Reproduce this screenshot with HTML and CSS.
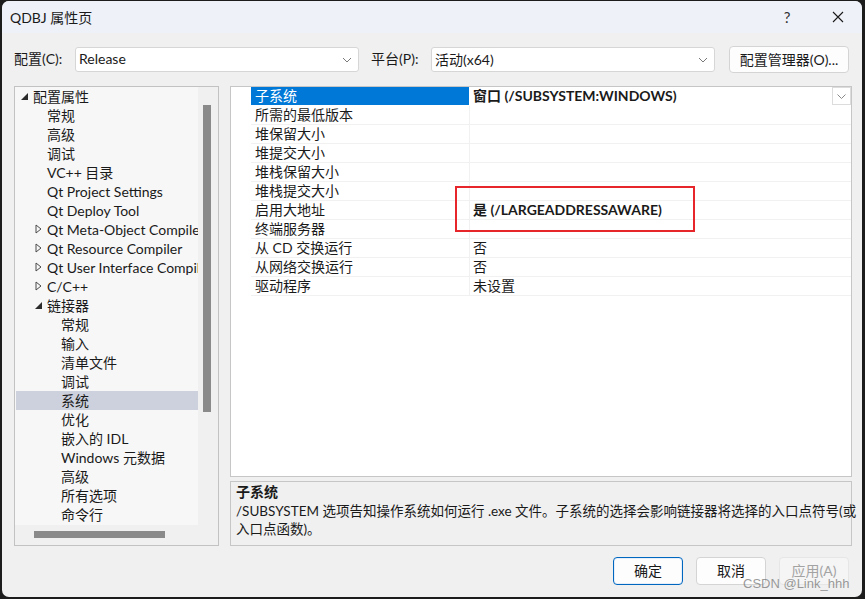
FILE: index.html
```html
<!DOCTYPE html>
<html lang="zh-CN">
<head>
<meta charset="utf-8">
<title>QDBJ 属性页</title>
<link rel="stylesheet" href="styles.css">
</head>
<body>
<div class="window">
  <div class="titlebar">
    <span class="title">QDBJ 属性页</span>
    <span class="tb-help">?</span>
    <span class="tb-close"><svg width="12" height="12" viewBox="0 0 12 12"><path d="M1 1 L11 11 M11 1 L1 11" stroke="#1a1a1a" stroke-width="1.1" fill="none"/></svg></span>
  </div>

  <div class="config">
    <span class="lbl lbl-cfg">配置(C):</span>
    <div class="combo"><span>Release</span><svg class="chev" width="10" height="6" viewBox="0 0 10 6"><path d="M1 1 L5 5 L9 1" stroke="#7a7a7a" stroke-width="1" fill="none"/></svg></div>
    <span class="lbl lbl-plat">平台(P):</span>
    <div class="combo"><span>活动(x64)</span><svg class="chev" width="10" height="6" viewBox="0 0 10 6"><path d="M1 1 L5 5 L9 1" stroke="#7a7a7a" stroke-width="1" fill="none"/></svg></div>
    <button class="btn btn-mgr">配置管理器(O)...</button>
  </div>

  <div class="main">
    <div class="tree">
      <div class="tree-body">
        <ul class="tree-list">
          <li class="l0"><span class="arrow"><svg width="7" height="7" viewBox="0 0 7 7"><path d="M7 0 L7 7 L0 7 Z" fill="#2b2b2b"/></svg></span>配置属性</li>
          <li class="l1"><span class="arrow"></span>常规</li>
          <li class="l1"><span class="arrow"></span>高级</li>
          <li class="l1"><span class="arrow"></span>调试</li>
          <li class="l1"><span class="arrow"></span>VC++ 目录</li>
          <li class="l1"><span class="arrow"></span>Qt Project Settings</li>
          <li class="l1"><span class="arrow"></span>Qt Deploy Tool</li>
          <li class="l1"><span class="arrow"><svg width="7" height="10" viewBox="0 0 7 10"><path d="M1 1 L6 5 L1 9 Z" fill="none" stroke="#4a4a4a" stroke-width="1"/></svg></span>Qt Meta-Object Compiler</li>
          <li class="l1"><span class="arrow"><svg width="7" height="10" viewBox="0 0 7 10"><path d="M1 1 L6 5 L1 9 Z" fill="none" stroke="#4a4a4a" stroke-width="1"/></svg></span>Qt Resource Compiler</li>
          <li class="l1"><span class="arrow"><svg width="7" height="10" viewBox="0 0 7 10"><path d="M1 1 L6 5 L1 9 Z" fill="none" stroke="#4a4a4a" stroke-width="1"/></svg></span>Qt User Interface Compiler</li>
          <li class="l1"><span class="arrow"><svg width="7" height="10" viewBox="0 0 7 10"><path d="M1 1 L6 5 L1 9 Z" fill="none" stroke="#4a4a4a" stroke-width="1"/></svg></span>C/C++</li>
          <li class="l1"><span class="arrow"><svg width="7" height="7" viewBox="0 0 7 7"><path d="M7 0 L7 7 L0 7 Z" fill="#2b2b2b"/></svg></span>链接器</li>
          <li class="l2"><span class="arrow"></span>常规</li>
          <li class="l2"><span class="arrow"></span>输入</li>
          <li class="l2"><span class="arrow"></span>清单文件</li>
          <li class="l2"><span class="arrow"></span>调试</li>
          <li class="l2 selected"><span class="arrow"></span>系统</li>
          <li class="l2"><span class="arrow"></span>优化</li>
          <li class="l2"><span class="arrow"></span>嵌入的 IDL</li>
          <li class="l2"><span class="arrow"></span>Windows 元数据</li>
          <li class="l2"><span class="arrow"></span>高级</li>
          <li class="l2"><span class="arrow"></span>所有选项</li>
          <li class="l2"><span class="arrow"></span>命令行</li>
        </ul>
        <div class="vscroll"><div class="vthumb"></div></div>
      </div>
      <div class="hscroll"><div class="hthumb"></div></div>
    </div>

    <div class="right">
      <div class="grid">
        <div class="row sel"><div class="name">子系统</div><div class="val bold"><span>窗口 (/SUBSYSTEM:WINDOWS)</span><span class="dd"><svg width="9" height="5" viewBox="0 0 9 5"><path d="M0.5 0.5 L4.5 4.5 L8.5 0.5" stroke="#8a8a8a" stroke-width="1" fill="none"/></svg></span></div></div>
        <div class="row"><div class="name">所需的最低版本</div><div class="val"></div></div>
        <div class="row"><div class="name">堆保留大小</div><div class="val"></div></div>
        <div class="row"><div class="name">堆提交大小</div><div class="val"></div></div>
        <div class="row"><div class="name">堆栈保留大小</div><div class="val"></div></div>
        <div class="row"><div class="name">堆栈提交大小</div><div class="val"></div></div>
        <div class="row"><div class="name">启用大地址</div><div class="val bold">是 (/LARGEADDRESSAWARE)</div></div>
        <div class="row"><div class="name">终端服务器</div><div class="val"></div></div>
        <div class="row"><div class="name">从 CD 交换运行</div><div class="val">否</div></div>
        <div class="row"><div class="name">从网络交换运行</div><div class="val">否</div></div>
        <div class="row"><div class="name">驱动程序</div><div class="val">未设置</div></div>
      </div>
      <div class="desc">
        <div class="desc-title">子系统</div>
        <div class="desc-text">/SUBSYSTEM 选项告知操作系统如何运行 .exe 文件。子系统的选择会影响链接器将选择的入口点符号(或<br>入口点函数)。</div>
      </div>
    </div>
  </div>

  <div class="footer">
    <button class="btn btn-default">确定</button>
    <button class="btn">取消</button>
    <button class="btn btn-disabled">应用(A)</button>
  </div>

  <div class="highlight"></div>
  <div class="watermark">CSDN @Link_hhh</div>
</div>
</body>
</html>
```
FILE: styles.css
```css
* { box-sizing: border-box; }
html, body { margin: 0; padding: 0; }
body {
  background: #1c1c1c;
  width: 865px;
  height: 599px;
  overflow: hidden;
  font-family: "Lato", "Noto Sans CJK SC", sans-serif;
  font-size: 14px;
  color: #1a1a1a;
}
.window {
  position: relative;
  margin: 1px 0 0 2px;
  width: 860px;
  height: 596px;
  background: #f0f0f0;
  border-radius: 7px;
  overflow: hidden;
  display: flex;
  flex-direction: column;
}
.titlebar {
  height: 32px;
  flex: none;
  background: #eef1f8;
  display: flex;
  align-items: center;
  padding-left: 8px;
}
.title { flex: 1; font-size: 14px; }
.tb-help { width: 12px; text-align: center; color: #333; font-size: 15px; margin-right: 39px; }
.tb-close { width: 12px; height: 12px; display: flex; margin-right: 18px; }

.config {
  margin-top: 13px;
  height: 27px;
  flex: none;
  display: flex;
  align-items: center;
  padding-left: 12px;
}
.lbl { flex: none; line-height: 25px; margin-top: -2px; }
.lbl-cfg { width: 61px; }
.lbl-plat { width: 60px; margin-left: 12px; }
.combo {
  width: 284px;
  height: 25px;
  background: #ffffff;
  border: 1px solid #d6d6d6;
  border-radius: 3px;
  display: flex;
  align-items: center;
  justify-content: space-between;
  padding: 0 6px 2px 3px;
}
.chev { flex: none; margin-top: 2px; }
.btn {
  font-family: "Lato", "Noto Sans CJK SC", sans-serif;
  font-size: 14px;
  color: #1a1a1a;
  background: #fdfdfd;
  border: 1px solid #d4d4d4;
  border-radius: 4px;
  height: 28px;
  width: 70px;
  padding: 0 0 2px;
}
.btn-mgr { width: 120px; height: 27px; margin-left: 14px; }

.main {
  margin-top: 13px;
  height: 460px;
  flex: none;
  display: flex;
  padding-left: 12px;
}
.tree {
  width: 205px;
  border: 1px solid #c2c2c2;
  display: flex;
  flex-direction: column;
  background: #f0f0f0;
}
.tree-body { flex: 1; display: flex; min-height: 0; }
.tree-list {
  list-style: none;
  margin: 0;
  padding: 0;
  width: 183px;
  background: #f7f7f7;
  overflow: hidden;
}
.tree-list li {
  height: 19px;
  line-height: 17px;
  white-space: nowrap;
  display: flex;
  align-items: center;
  padding-bottom: 1px;
}
.tree-list .l0 { padding-left: 4px; }
.tree-list .l1 { padding-left: 18px; }
.tree-list .l2 { padding-left: 32px; }
.tree-list .selected { background: #cdd0dd; margin-left: 1px; padding-left: 31px; }
.arrow { width: 14px; flex: none; display: flex; align-items: center; justify-content: flex-start; padding-left: 2px; }
.vscroll { width: 20px; position: relative; }
.vthumb { margin: 18px 0 0 5px; width: 8px; height: 307px; background: #8a8a8a; }
.hscroll { height: 20px; flex: none; }
.hthumb { margin: 6px 0 0 19px; width: 131px; height: 7px; background: #8a8a8a; }

.right {
  width: 622px;
  margin-left: 11px;
  display: flex;
  flex-direction: column;
}
.grid {
  height: 392px;
  background: #ffffff;
  border: 1px solid #c6c6c6;
  padding-left: 20px;
}
.row {
  display: flex;
  height: 19px;
  border-bottom: 1px solid #f1f1f1;
}
.name {
  width: 219px;
  padding-left: 4px;
  line-height: 17px;
  border-right: 1px solid #f1f1f1;
  white-space: nowrap;
}
.val {
  flex: 1;
  padding-left: 3px;
  line-height: 17px;
  display: flex;
  justify-content: space-between;
}
.bold { font-weight: bold; }
.sel { border-bottom-color: #ffffff; }
.sel .name { background: #0078d7; color: #ffffff; border-right-color: #ffffff; }
.dd {
  width: 19px;
  height: 18px;
  border: 1px solid #dcdcdc;
  background: #ffffff;
  display: flex;
  align-items: center;
  justify-content: center;
}
.desc {
  margin-top: 4px;
  height: 65px;
  border: 1px solid #c6c6c6;
  background: #f0f0f0;
  padding: 1px 5px 0;
  line-height: 18.5px;
}
.desc-title { font-weight: bold; }
.desc-text { white-space: nowrap; font-size: 13.5px; }

.footer {
  margin-top: 11px;
  display: flex;
  justify-content: flex-end;
  gap: 13px;
  padding-right: 13px;
}
.btn-default { border: 1px solid #0067c0; box-shadow: inset 0 0 0 1px #e6eefa; }
.btn-disabled { color: #a3a3a3; background: #f5f5f5; border-color: #e6e6e6; }

.highlight {
  position: absolute;
  left: 453px;
  top: 185px;
  width: 240px;
  height: 46px;
  border: 2px solid #e6262b;
}
.watermark {
  position: absolute;
  left: 741px;
  top: 575px;
  font-family: "Liberation Sans", sans-serif;
  font-size: 13px;
  color: rgba(120, 120, 120, 0.75);
}
```
